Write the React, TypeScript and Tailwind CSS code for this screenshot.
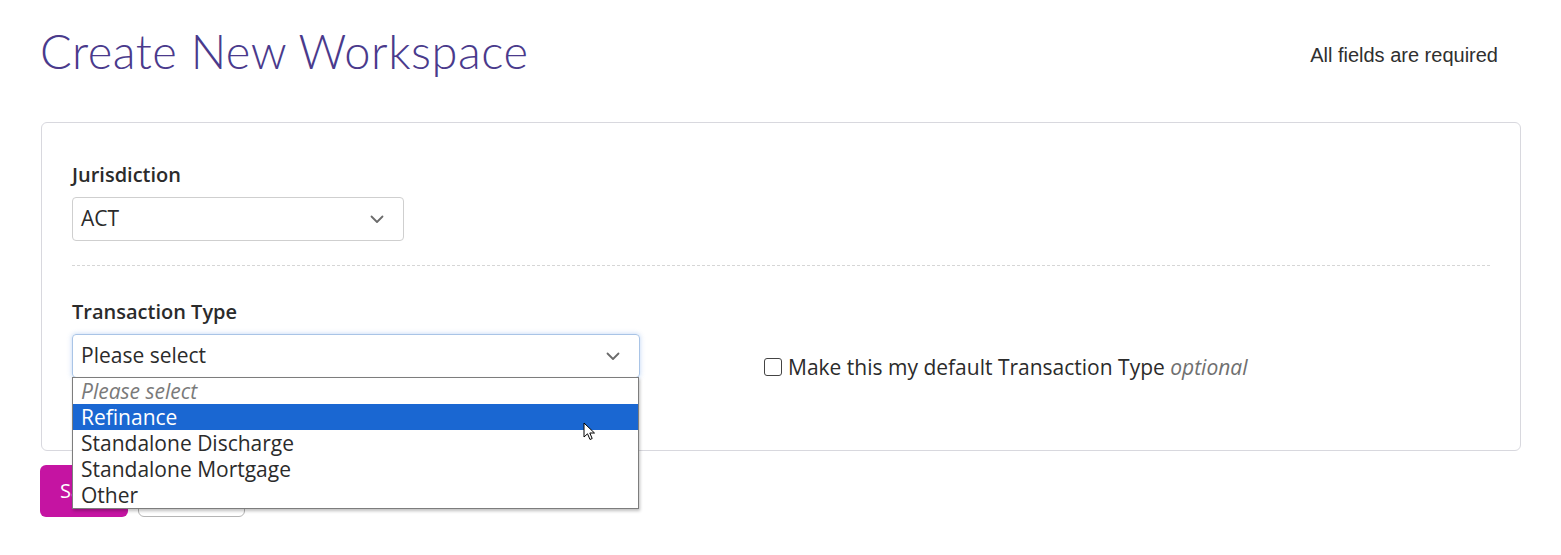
import React from "react"

const options = ["Please select", "Refinance", "Standalone Discharge", "Standalone Mortgage", "Other"]

function Chevron() {
  return (
    <svg width="14" height="9" viewBox="0 0 14 9" className="text-[#6b6b6b]">
      <path d="M1.5 1.5 L7 7 L12.5 1.5" fill="none" stroke="currentColor" strokeWidth="1.8" strokeLinecap="round" strokeLinejoin="round" />
    </svg>
  )
}

function Cursor() {
  return (
    <svg width="14" height="20" viewBox="0 0 14 20" className="absolute left-[510px] top-[44px]">
      <path d="M1 1 L1 15 L4.5 11.8 L7 17.5 L9.2 16.5 L6.8 11 L11.5 11 Z" fill="#fff" stroke="#000" strokeWidth="1" strokeLinejoin="round" />
    </svg>
  )
}

export default function App() {
  return (
    <div className="min-h-[555px] bg-white px-[40px] pt-[23px] font-['Open_Sans',sans-serif] text-[#2b2b2b]">
      <div className="flex items-start justify-between pr-[23px]">
        <h1 className="font-['Lato',sans-serif] text-[47px] font-light leading-[56px] tracking-[0.5px] text-[#4a3a8c]">
          Create New Workspace
        </h1>
        <div className="pt-[17px] font-['Liberation_Sans',sans-serif] text-[20px] text-[#2f2f2f]">All fields are required</div>
      </div>

      <div className="mt-[43px] ml-px rounded-[6px] border border-[#d8d8de] px-[30px] pt-[40px] pb-[71px]">
        <div className="text-[20px] font-semibold leading-[24px] text-[#2b2b2b]">Jurisdiction</div>
        <div className="mt-[10px] flex h-[44px] w-[332px] items-center justify-between rounded-[4px] border border-[#cfcfcf] pl-[8px] pr-[19px] text-[21px]">
          <span>ACT</span>
          <Chevron />
        </div>

        <div className="mt-[24px] border-t border-dashed border-[#d6d6d6]" />

        <div className="mt-[34px] text-[20px] font-semibold leading-[24px] text-[#2b2b2b]">Transaction Type</div>
        <div className="mt-[10px] flex items-start">
          <div className="relative">
            <div className="flex h-[44px] w-[568px] items-center justify-between rounded-[4px] border border-[#a9c4e6] pl-[8px] pr-[19px] text-[21px] shadow-[0_0_5px_rgba(110,160,230,0.45)]">
              <span>Please select</span>
              <Chevron />
            </div>
            <div className="absolute left-0 top-[43px] z-10 w-[567px] border border-[#7d7d7d] bg-white shadow-[1px_2px_3px_rgba(0,0,0,0.25)]">
              {options.map((o, i) => (
                <div
                  key={o}
                  className={
                    i === 0
                      ? "h-[26px] pl-[8px] text-[21px] leading-[26px] italic text-[#7a7a7a]"
                      : i === 1
                      ? "h-[26px] bg-[#1a67d2] pl-[8px] text-[21px] leading-[26px] text-white"
                      : "h-[26px] pl-[8px] text-[21px] leading-[26px] text-[#2b2b2b]"
                  }
                >
                  {o}
                </div>
              ))}
              <Cursor />
            </div>
          </div>
          <label className="ml-[124px] mt-[21px] flex items-center gap-[6px] text-[21px] leading-[24px] text-[#2b2b2b]">
            <span className="inline-block h-[18px] w-[18px] rounded-[3px] border-[1.5px] border-[#444] bg-white" />
            <span>
              Make this my default Transaction Type <em className="text-[#707070]">optional</em>
            </span>
          </label>
        </div>
      </div>

      <div className="mt-[14px] flex items-start gap-[10px]">
        <button className="h-[52px] w-[88px] rounded-[6px] bg-[#c514a2] pl-[20px] text-left text-[20px] text-white">
          Save
        </button>
        <button className="mt-[20px] h-[32px] w-[107px] rounded-[6px] border border-[#b5b5b5] bg-white text-[18px] text-[#444]">
          Cancel
        </button>
      </div>
    </div>
  )
}
